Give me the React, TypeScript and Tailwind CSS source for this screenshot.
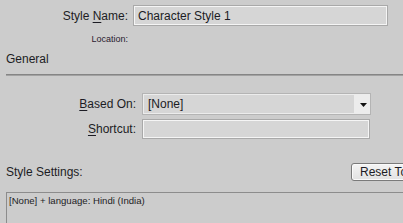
import React from "react";

export default function App() {
  return (
    <div className="w-[403px] h-[223px] bg-[#cccccc] overflow-hidden font-['Liberation_Sans',Arial,sans-serif] text-[12px] text-[#1c1c24] flex flex-col">
      <div className="flex items-center h-[21px] mt-[5px] shrink-0">
        <div className="w-[128px] text-right leading-none">
          Style <span className="underline underline-offset-2">N</span>ame:
        </div>
        <div className="ml-[5px] w-[255px] h-[21px] border border-[#a9a9a9] bg-[#d6d6d6] shadow-[inset_0_0_0_1px_#f5f5f5] flex items-center pl-[4px] leading-none">
          Character Style 1
        </div>
      </div>
      <div className="flex h-[12px] mt-[7px] items-center shrink-0">
        <div className="w-[128px] text-right text-[9px] leading-none text-[#2a2030]">Location:</div>
      </div>
      <div className="h-[14px] mt-[7px] pl-[6px] flex items-center leading-none text-[12px] shrink-0">General</div>
      <div className="mt-[8px] ml-[6px] shrink-0 flex flex-col">
        <div className="h-[1px] bg-[#858585]" />
        <div className="h-[1px] bg-[#a2a2a2]" />
      </div>
      <div className="flex items-center h-[22px] mt-[17px] shrink-0">
        <div className="w-[136px] text-right leading-none">
          <span className="underline underline-offset-2">B</span>ased On:
        </div>
        <div className="ml-[6px] w-[229px] h-[22px] border border-[#b4b4b4] bg-[#ececec] flex items-center">
          <div className="w-[210px] h-[18px] ml-[1px] bg-[#d6d6d6] flex items-center pl-[4px] leading-none">[None]</div>
          <div className="flex-1 flex items-center justify-center pt-[1px] pl-[2px]">
            <svg width="7" height="4" viewBox="0 0 7 4">
              <path d="M0 0 H7 L3.5 4 Z" fill="#111" />
            </svg>
          </div>
        </div>
      </div>
      <div className="flex items-center h-[20px] mt-[4px] shrink-0">
        <div className="w-[136px] text-right leading-none">
          <span className="underline underline-offset-2">S</span>hortcut:
        </div>
        <div className="ml-[6px] w-[228px] h-[20px] border border-[#a9a9a9] bg-[#d6d6d6] shadow-[inset_0_0_0_1px_#f5f5f5]" />
      </div>
      <div className="flex items-center h-[18px] mt-[24px] shrink-0">
        <div className="w-[351px] shrink-0 pl-[6px] leading-none text-[12px]">Style Settings:</div>
        <div className="w-[90px] shrink-0 h-[18px] rounded-[3px] border border-[#7a7a7a] bg-gradient-to-b from-[#f4f4f4] to-[#e2e2e2] shadow-[inset_0_0_0_1px_#fafafa] flex items-center pl-[8px] leading-none whitespace-nowrap">
          Reset To Base
        </div>
      </div>
      <div className="mt-[11px] ml-[6px] flex-1 border-t border-l border-[#8c8c8c] pl-[2px] pt-[3px]">
        <div className="text-[9.6px] leading-none text-[#1c1c24]">[None] + language: Hindi (India)</div>
      </div>
    </div>
  );
}
